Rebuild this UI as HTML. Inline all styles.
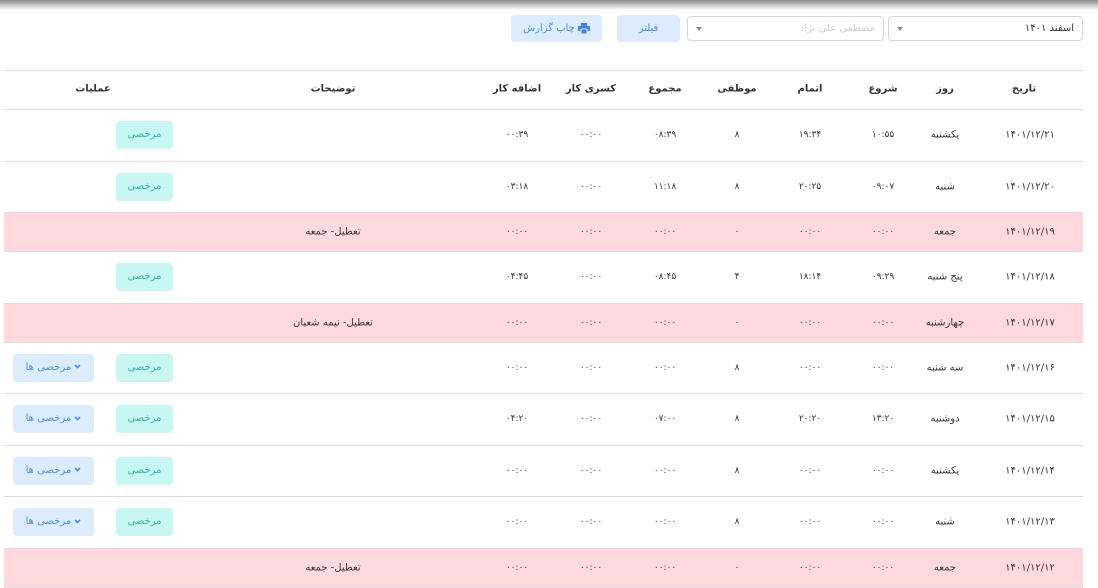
<!DOCTYPE html>
<html><head><meta charset="utf-8">
<style>
body{margin:0;width:1098px;height:572px;overflow:hidden;background:#fff;font-family:"DejaVu Sans",sans-serif;color:#333;position:relative}
.shadow{position:absolute;left:0;top:0;width:1098px;height:10px;background:linear-gradient(#8a8a8a,#fff)}
.sel{position:absolute;top:16px;height:25px;border:1px solid #d6d6d6;border-radius:4px;box-sizing:border-box;font-size:10px;direction:rtl;line-height:23px;padding-right:8px}
.sel:after{content:"";position:absolute;left:8px;top:10px;border:3px solid transparent;border-top:4px solid #888}
.btn{position:absolute;border-radius:4px;font-size:10px;text-align:center;direction:rtl}
.line{position:absolute;left:4px;width:1079px;height:1px;background:#dedede}
.pink{position:absolute;left:4px;width:1079px;background:#fed9dd}
.c{position:absolute;transform:translate(-50%,-50%);white-space:nowrap;font-size:9px;direction:rtl}
.h{font-size:10px;font-weight:bold}
.m{position:absolute;left:116px;width:57px;height:28px;background:#c8f6f2;color:#2bb5a8;border-radius:4px;font-size:10px;text-align:center;line-height:28px}
.mh{position:absolute;left:13px;width:81px;height:28px;background:#dcecfd;color:#4a90e2;border-radius:4px;font-size:10px;text-align:center;line-height:28px;direction:rtl}
svg{vertical-align:middle}
</style></head><body>
<div class="shadow"></div>
<div class="sel" style="left:888px;width:195px">اسفند ۱۴۰۱</div>
<div class="sel" style="left:687px;width:197px;color:#ccc">مصطفی علی نژاد</div>
<div class="btn" style="left:617px;top:15px;width:63px;height:27px;line-height:27px;background:#dcecfd;color:#4a90e2">فیلتر</div>
<div class="btn" style="left:511px;top:15px;width:91px;height:27px;line-height:27px;background:#dcecfd;color:#4a90e2"><svg width="12" height="11" viewBox="0 0 12 11"><rect x="3" y="0" width="6" height="3" fill="#3b82e0"/><rect x="0" y="3" width="12" height="5" rx="1" fill="#3b82e0"/><rect x="3" y="6" width="6" height="5" fill="#3b82e0" stroke="#dcecfd" stroke-width="1"/></svg> چاپ گزارش</div>
<div class="line" style="top:70px"></div>
<div class="line" style="top:109px"></div>
<div id="t"></div>
<script>
var cols=[1030,945,883,810,737,665,591,517];
var hd=["تاریخ","روز","شروع","اتمام","موظفی","مجموع","کسری کار","اضافه کار"];
var H='';
hd.forEach(function(s,i){H+='<div class="c h" style="left:'+(i==0?1024:cols[i])+'px;top:89px">'+s+'</div>'});
H+='<div class="c h" style="left:333px;top:89px">توضیحات</div><div class="c h" style="left:93px;top:89px">عملیات</div>';
var z='۰۰:۰۰';
var chev='<svg width="7" height="5" viewBox="0 0 7 5"><path d="M1 1l2.5 2.5L6 1" stroke="#4a90e2" stroke-width="1.6" fill="none"/></svg>';
var rows=[
[109,52,['۱۴۰۱/۱۲/۲۱','یکشنبه','۱۰:۵۵','۱۹:۳۴','۸','۰۸:۳۹',z,'۰۰:۳۹'],'',1,0],
[161,51,['۱۴۰۱/۱۲/۲۰','شنبه','۰۹:۰۷','۲۰:۲۵','۸','۱۱:۱۸',z,'۰۳:۱۸'],'',1,0],
[212,39,['۱۴۰۱/۱۲/۱۹','جمعه',z,z,'۰',z,z,z],'تعطیل- جمعه',0,0,1],
[251,52,['۱۴۰۱/۱۲/۱۸','پنج شنبه','۰۹:۲۹','۱۸:۱۴','۴','۰۸:۴۵',z,'۰۴:۴۵'],'',1,0],
[303,39,['۱۴۰۱/۱۲/۱۷','چهارشنبه',z,z,'۰',z,z,z],'تعطیل- نیمه شعبان',0,0,1],
[342,51,['۱۴۰۱/۱۲/۱۶','سه شنبه',z,z,'۸',z,z,z],'',1,1],
[393,52,['۱۴۰۱/۱۲/۱۵','دوشنبه','۱۳:۲۰','۲۰:۲۰','۸','۰۷:۰۰',z,'۰۴:۲۰'],'',1,1],
[445,51,['۱۴۰۱/۱۲/۱۴','یکشنبه',z,z,'۸',z,z,z],'',1,1],
[496,52,['۱۴۰۱/۱۲/۱۳','شنبه',z,z,'۸',z,z,z],'',1,1],
[548,39,['۱۴۰۱/۱۲/۱۲','جمعه',z,z,'۰',z,z,z],'تعطیل- جمعه',0,0,1]
];
rows.forEach(function(r){
 var y=r[0],h=r[1],cy=y+h/2;
 if(r[6])H+='<div class="pink" style="top:'+(y+1)+'px;height:'+(h-1)+'px"></div>';
 H+='<div class="line" style="top:'+(y+h)+'px"></div>';
 r[2].forEach(function(s,i){H+='<div class="c" style="left:'+cols[i]+'px;top:'+cy+'px;'+(i<2?'font-size:10px':'')+'">'+s+'</div>'});
 if(r[3])H+='<div class="c" style="left:333px;top:'+cy+'px;font-size:10px">'+r[3]+'</div>';
 if(r[4])H+='<div class="m" style="top:'+(cy-14)+'px">مرخصی</div>';
 if(r[5])H+='<div class="mh" style="top:'+(cy-14)+'px">'+chev+' مرخصی ها</div>';
});
document.getElementById('t').innerHTML=H;
</script>
</body></html>
